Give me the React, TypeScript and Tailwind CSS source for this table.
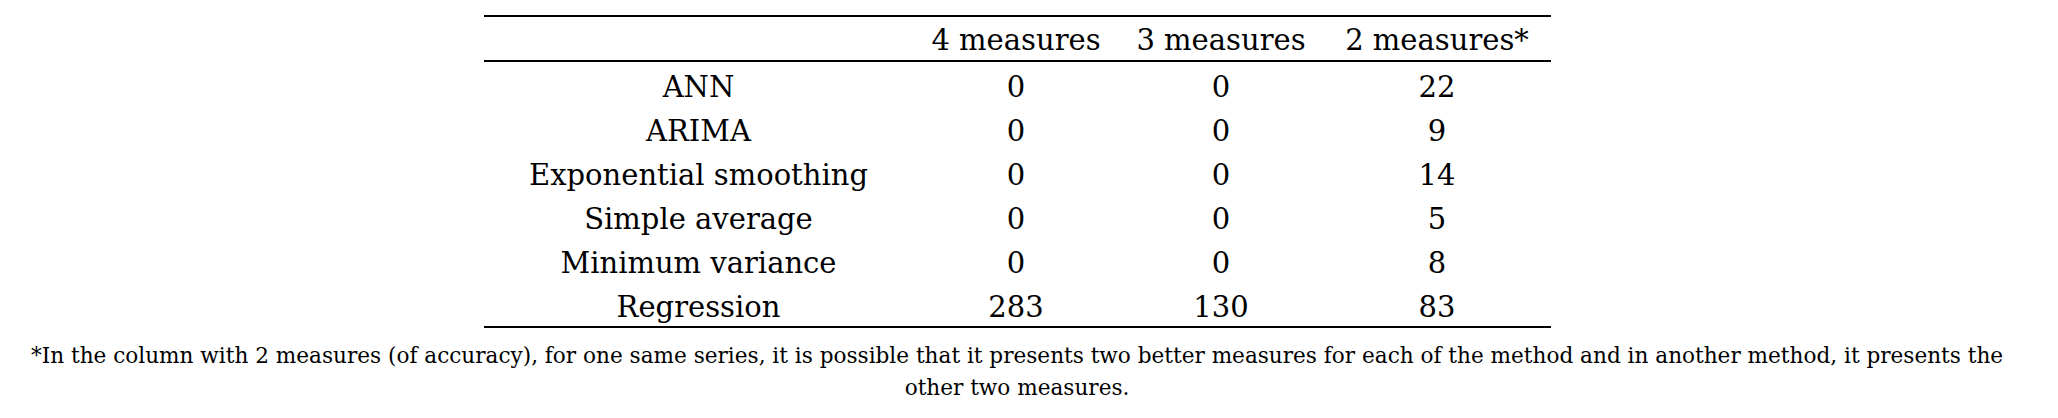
import React from "react";

type Row = { name: string; a: string; b: string; c: string };

const rows: Row[] = [
  { name: "ANN", a: "0", b: "0", c: "22" },
  { name: "ARIMA", a: "0", b: "0", c: "9" },
  { name: "Exponential smoothing", a: "0", b: "0", c: "14" },
  { name: "Simple average", a: "0", b: "0", c: "5" },
  { name: "Minimum variance", a: "0", b: "0", c: "8" },
  { name: "Regression", a: "283", b: "130", c: "83" },
];

export default function App() {
  return (
    <div className="w-[2034px] bg-white pt-[15px] text-black font-['DejaVu_Serif',serif]">
      <table className="mx-auto w-[1067px] table-fixed border-collapse text-[29px]">
        <colgroup>
          <col className="w-[430px]" />
          <col className="w-[205px]" />
          <col className="w-[205px]" />
          <col className="w-[227px]" />
        </colgroup>
        <thead>
          <tr className="border-t-2 border-b-2 border-black">
            <th className="h-[43px] p-0 pt-[3px] align-top font-normal leading-[40px]"></th>
            <th className="h-[43px] p-0 pt-[3px] align-top text-center font-normal leading-[40px]">4 measures</th>
            <th className="h-[43px] p-0 pt-[3px] align-top text-center font-normal leading-[40px]">3 measures</th>
            <th className="h-[43px] p-0 pt-[3px] align-top text-center font-normal leading-[40px]">2 measures*</th>
          </tr>
        </thead>
        <tbody>
          {rows.map((r, i) => (
            <tr key={r.name} className={i === rows.length - 1 ? "border-b-2 border-black" : ""}>
              <td className="h-[44px] p-0 pt-[6px] align-top text-center leading-[38px]">{r.name}</td>
              <td className="h-[44px] p-0 pt-[6px] align-top text-center leading-[38px]">{r.a}</td>
              <td className="h-[44px] p-0 pt-[6px] align-top text-center leading-[38px]">{r.b}</td>
              <td className="h-[44px] p-0 pt-[6px] align-top text-center leading-[38px]">{r.c}</td>
            </tr>
          ))}
        </tbody>
      </table>
      <p className="mx-auto mt-[12px] w-[2010px] text-center text-[21.6px] leading-[32px]">
        *In the column with 2 measures (of accuracy), for one same series, it is possible that it presents two better
        measures for each of the method and in another method, it presents the other two measures.
      </p>
    </div>
  );
}
